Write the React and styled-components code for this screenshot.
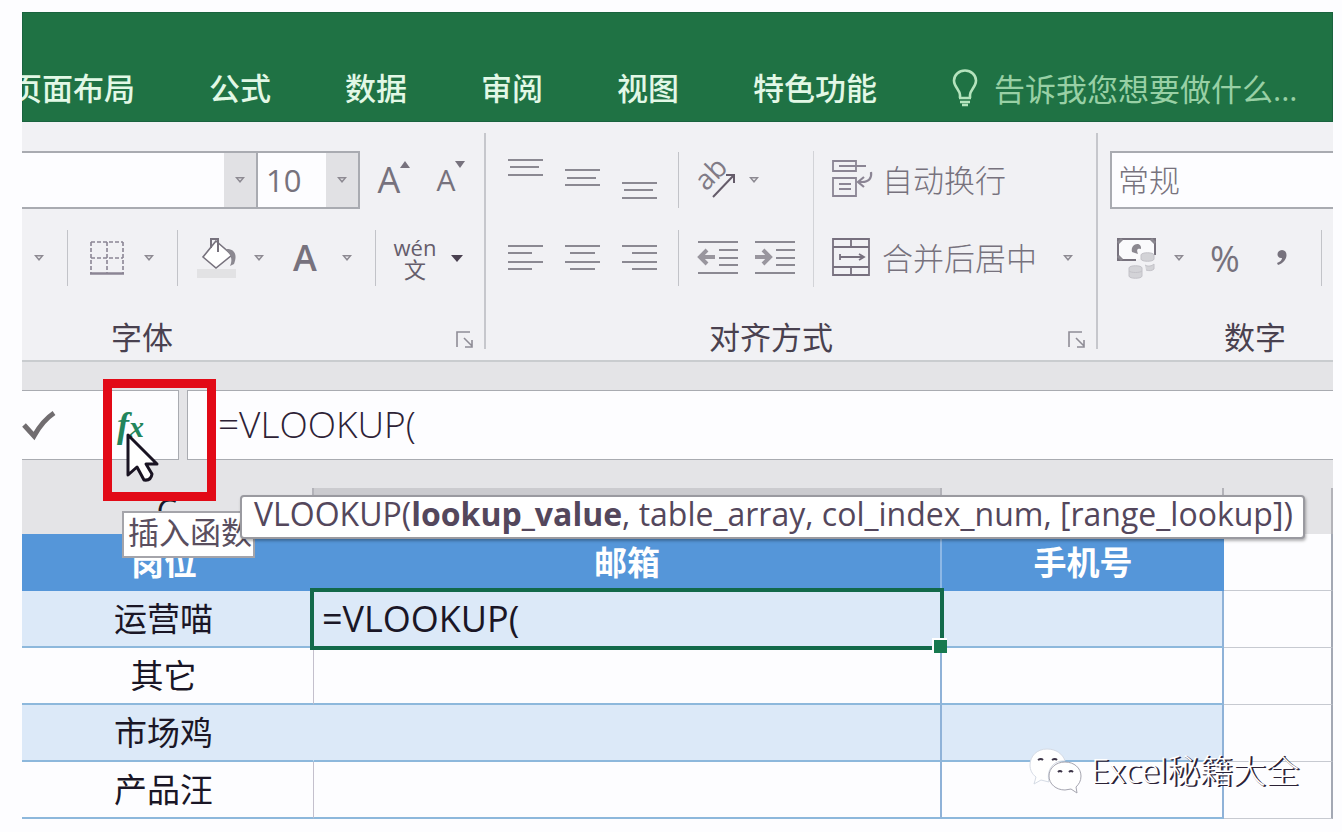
import React, { useState } from "react";
import styled, { createGlobalStyle } from "styled-components";

const people = ["运营喵", "其它", "市场鸡", "产品汪"];

const DropArrow = ({ dark }) => (
  <svg width="12" height="8" viewBox="0 0 12 8" aria-hidden="true">
    {dark ? (
      <path d="M0 1h12L6 8z" fill="#4a4150" />
    ) : (
      <path d="M1 1h10L6 7z M4 2.6h4L6 4.6z" fill="#8d8a92" fillRule="evenodd" />
    )}
  </svg>
);

const Lines = ({ rows, height = 36 }) => (
  <svg width="36" height={height} viewBox={`0 0 36 ${height}`} aria-hidden="true">
    {rows.map(([x, y, w]) => (
      <rect key={y} x={x} y={y} width={w} height="2" fill="#8b8992" />
    ))}
  </svg>
);

const Launcher = () => (
  <svg width="18" height="18" viewBox="0 0 18 18" fill="none" stroke="#8f8d96" strokeWidth="1.6" aria-hidden="true">
    <path d="M1 16V1h13" />
    <path d="M8 7l8 8M16 9v7H9" />
  </svg>
);

const IndentIcon = ({ right }) => (
  <svg width="40" height="34" viewBox="0 0 40 34" aria-hidden="true">
    <g fill="#8b8992">
      <rect x="0" y="0" width="40" height="2" />
      <rect x="21" y="8" width="19" height="2" />
      <rect x="21" y="16" width="19" height="2" />
      <rect x="21" y="23" width="19" height="2" />
      <rect x="0" y="31" width="40" height="2" />
    </g>
    <path
      d={right ? "M0 16h14M8 9l7 7-7 7" : "M17 16H3M9 9l-7 7 7 7"}
      fill="none"
      stroke="#99969e"
      strokeWidth="4"
    />
  </svg>
);

const App = () => {
  const [formula, setFormula] = useState("=VLOOKUP(");

  return (
    <Page>
      <GlobalStyle />
      <Workbook>
        <TabBar>
          <Tabs>
            {["页面布局", "公式", "数据", "审阅", "视图", "特色功能"].map((name) => (
              <Tab key={name} type="button">
                {name}
              </Tab>
            ))}
          </Tabs>
          <TellMe>
            <svg width="26" height="38" viewBox="0 0 26 38" fill="none" stroke="#b4e3bd" strokeWidth="2.6" aria-hidden="true">
              <path d="M8 29v-3C8 21 2 18 2 11.500A11 10 0 0 1 24 11.500C24 18 18 21 18 26v3" />
              <path d="M7 29h12M8 33h10M10 36h6" />
            </svg>
            <TellMeInput aria-label="告诉我" placeholder="告诉我您想要做什么..." />
          </TellMe>
        </TabBar>

        <Ribbon>
          <Group>
            <Tools>
              <ToolRow>
                <Combos>
                  <Combo $grow>
                    <ComboSelect aria-label="字体" defaultValue="">
                      <option value=""></option>
                    </ComboSelect>
                    <ComboArrow>
                      <DropArrow />
                    </ComboArrow>
                  </Combo>
                  <Combo>
                    <ComboSelect aria-label="字号" defaultValue="10">
                      <option>10</option>
                    </ComboSelect>
                    <ComboArrow>
                      <DropArrow />
                    </ComboArrow>
                  </Combo>
                </Combos>
                <ToolButton type="button" aria-label="增大字号">
                  <Letter>A</Letter>
                  <SizeMark>
                    <path d="M0 7L5 0l5 7z" />
                  </SizeMark>
                </ToolButton>
                <ToolButton type="button" aria-label="减小字号">
                  <Letter $small>A</Letter>
                  <SizeMark>
                    <path d="M0 0h10L5 7z" />
                  </SizeMark>
                </ToolButton>
              </ToolRow>
              <ToolRow $indent={5}>
                <DropButton type="button" aria-label="下划线">
                  <DropArrow />
                </DropButton>
                <Divider />
                <Split>
                  <ToolButton type="button" aria-label="边框">
                    <svg width="34" height="34" viewBox="0 0 34 34" fill="none" stroke="#8b8594" aria-hidden="true">
                      <path d="M1 1h32M1 17h32M1 1v31M17 1v31M33 1v31" strokeWidth="1.6" strokeDasharray="4 2" />
                      <path d="M0 32.500h34" strokeWidth="2.4" />
                    </svg>
                  </ToolButton>
                  <DropButton type="button" aria-label="边框选项">
                    <DropArrow />
                  </DropButton>
                </Split>
                <Divider />
                <Split>
                  <ToolButton type="button" aria-label="填充颜色">
                    <svg width="40" height="42" viewBox="0 0 40 42" aria-hidden="true">
                      <rect x="0" y="32" width="39" height="9" fill="#e2e2e4" />
                      <path d="M19 4L35 18 19 31 6 20z" fill="#fff" stroke="#77727d" strokeWidth="1.600" />
                      <path d="M14 11V2h7v13" fill="none" stroke="#77727d" strokeWidth="2" />
                      <path d="M28 12c9-1 13 5 9 15l-4 2c3-7 1-11-5-17z" fill="#8b8890" />
                    </svg>
                  </ToolButton>
                  <DropButton type="button" aria-label="填充颜色选项">
                    <DropArrow />
                  </DropButton>
                </Split>
                <Split>
                  <ToolButton type="button" aria-label="字体颜色">
                    <Letter $heavy>A</Letter>
                  </ToolButton>
                  <DropButton type="button" aria-label="字体颜色选项">
                    <DropArrow />
                  </DropButton>
                </Split>
                <Divider />
                <Split>
                  <PinyinButton type="button">
                    <span>wén</span>
                    <span>文</span>
                  </PinyinButton>
                  <DropButton type="button" aria-label="拼音选项">
                    <DropArrow dark />
                  </DropButton>
                </Split>
              </ToolRow>
            </Tools>
            <Caption $indent={89}>
              字体
              <LauncherButton type="button" aria-label="字体设置">
                <Launcher />
              </LauncherButton>
            </Caption>
          </Group>

          <Group>
            <AlignTools>
              <Tools>
                <ToolRow>
                  <ToolButton type="button" aria-label="顶端对齐">
                    <Lines height={42} rows={[[1, 0, 35], [3, 7, 29], [1, 15, 35]]} />
                  </ToolButton>
                  <ToolButton type="button" aria-label="垂直居中">
                    <Lines height={42} rows={[[1, 10, 35], [3, 18, 29], [1, 25, 35]]} />
                  </ToolButton>
                  <ToolButton type="button" aria-label="底端对齐">
                    <Lines height={42} rows={[[1, 23, 35], [3, 30, 29], [1, 38, 35]]} />
                  </ToolButton>
                  <Divider />
                  <Split>
                    <ToolButton type="button" aria-label="方向" $narrow>
                      <svg width="40" height="40" viewBox="0 0 40 40" aria-hidden="true">
                        <text x="11" y="32" transform="rotate(-45 11 32)" fontSize="28" fill="#807b86">
                          ab
                        </text>
                        <path d="M18 37L39 15M31 15h8v8" fill="none" stroke="#655c6a" strokeWidth="2" />
                      </svg>
                    </ToolButton>
                    <DropButton type="button" aria-label="方向选项">
                      <DropArrow />
                    </DropButton>
                  </Split>
                </ToolRow>
                <ToolRow>
                  <ToolButton type="button" aria-label="左对齐">
                    <Lines height={28} rows={[[1, 1, 35], [1, 8, 24], [1, 17, 35], [1, 24, 24]]} />
                  </ToolButton>
                  <ToolButton type="button" aria-label="居中">
                    <Lines height={28} rows={[[1, 1, 35], [6, 8, 25], [1, 17, 35], [6, 24, 25]]} />
                  </ToolButton>
                  <ToolButton type="button" aria-label="右对齐">
                    <Lines height={28} rows={[[1, 1, 35], [11, 8, 25], [1, 17, 35], [11, 24, 25]]} />
                  </ToolButton>
                  <Divider />
                  <ToolButton type="button" aria-label="减少缩进量">
                    <IndentIcon />
                  </ToolButton>
                  <ToolButton type="button" aria-label="增加缩进量">
                    <IndentIcon right />
                  </ToolButton>
                </ToolRow>
              </Tools>
              <TallDivider />
              <Tools>
                <ToolRow>
                  <TextButton type="button">
                    <svg width="40" height="40" viewBox="0 0 40 40" fill="none" stroke="#8b8594" strokeWidth="1.800" aria-hidden="true">
                      <path d="M1 1h23v10H1zM7 6h27M1 18h23v18H1zM7 24h12M7 29h12" />
                      <path d="M39 12c1 6-2 10-9 10h-3M32 17l-6 5 6 5" strokeWidth="2.200" />
                    </svg>
                    自动换行
                  </TextButton>
                </ToolRow>
                <ToolRow>
                  <TextButton type="button">
                    <svg width="40" height="40" viewBox="0 0 40 40" fill="none" stroke="#77707e" strokeWidth="1.800" aria-hidden="true">
                      <path d="M1 1h36v36H1zM1 9h36M1 29h36M19 1v8M19 29v8" />
                      <path d="M8 19h23M8 16v6M27 16l5 3-5 3" />
                    </svg>
                    合并后居中
                  </TextButton>
                  <DropButton type="button" aria-label="合并选项">
                    <DropArrow />
                  </DropButton>
                </ToolRow>
              </Tools>
            </AlignTools>
            <Caption>
              <span>对齐方式</span>
              <LauncherButton type="button" aria-label="对齐设置">
                <Launcher />
              </LauncherButton>
            </Caption>
          </Group>

          <Group>
            <NumberTools>
              <NumberCombo>
                <ComboSelect aria-label="数字格式" defaultValue="常规">
                  <option>常规</option>
                </ComboSelect>
              </NumberCombo>
              <ToolRow $indent={4}>
                <Split>
                  <ToolButton type="button" aria-label="会计数字格式">
                    <svg width="40" height="42" viewBox="0 0 40 42" fill="none" aria-hidden="true">
                      <path d="M19 23H1V2h37v16" stroke="#77727d" strokeWidth="2" fill="#fafafc" />
                      <path d="M1 6l4-4M34 2l4 4M1 19l4 4" stroke="#8b8890" strokeWidth="3" />
                      <path d="M15 15c-2-9 10-11 9-3-5-1-4 2-3 5z" fill="#8b8890" />
                      <g fill="#d3d3d7" stroke="#c3c2c8">
                        <path d="M24 18c0-3 13-3 13 0v4c0 3-13 3-13 0zM12 31c0-3 13-3 13 0v8c0 3-13 3-13 0z" />
                        <path d="M12 34c2 2 11 2 13 0M28 28c3 2 7 1 9-1v5c-2 2-5 2-8 1" />
                      </g>
                    </svg>
                  </ToolButton>
                  <DropButton type="button" aria-label="会计格式选项">
                    <DropArrow />
                  </DropButton>
                </Split>
                <SymbolButton type="button">%</SymbolButton>
                <ToolButton type="button" aria-label="千位分隔样式">
                  <svg width="10" height="18" viewBox="0 0 10 18" aria-hidden="true">
                    <path d="M5 1c7 0 6 12-4 15l-1-2c3-1 5-3 5-5C-1 10-1 1 5 1z" fill="#77727d" />
                  </svg>
                </ToolButton>
                <Divider />
              </ToolRow>
            </NumberTools>
            <Caption $indent={126}>数字</Caption>
          </Group>
        </Ribbon>

        <FormulaBar>
          <FormulaButtons>
            <EnterButton type="button" aria-label="输入">
              <svg width="34" height="30" viewBox="0 0 34 30" aria-hidden="true">
                <path d="M2 15l10 11C17 17 23 9 32 3" fill="none" stroke="#716d70" strokeWidth="5" />
              </svg>
            </EnterButton>
            <FxButton type="button">
              f<small>x</small>
            </FxButton>
            <Highlight />
            <Cursor width="34" height="50" viewBox="0 0 34 50">
              <path
                d="M2 2v40l9-8 7 13q7 1 8-6l-6-10h11z"
                fill="#fff"
                stroke="#191322"
                strokeWidth="3"
                strokeLinejoin="round"
              />
            </Cursor>
            <ButtonTip role="tooltip">插入函数</ButtonTip>
          </FormulaButtons>
          <FormulaInput aria-label="编辑栏" value={formula} onChange={(e) => setFormula(e.target.value)} />
          <FormulaTip role="tooltip">
            VLOOKUP(<b>lookup_value</b>, table_array, col_index_num, [range_lookup])
          </FormulaTip>
        </FormulaBar>

        <Sheet>
          <colgroup>
            <Col $width="22.27%" />
            <Col $width="47.9%" />
            <Col $width="21.51%" />
            <Col />
          </colgroup>
          <thead>
            <tr>
              <ColumnHead scope="col">C</ColumnHead>
              <ColumnHead $active />
              <ColumnHead />
              <ColumnHead />
            </tr>
          </thead>
          <tbody>
            <HeadRow>
              <th scope="col">岗位</th>
              <th scope="col">邮箱</th>
              <th scope="col">手机号</th>
              <td />
            </HeadRow>
            {people.map((name, i) => (
              <Row key={name} $shaded={i % 2 === 0}>
                <td>{name}</td>
                {i === 0 ? (
                  <ActiveCell>
                    {formula}
                    <Selection />
                  </ActiveCell>
                ) : (
                  <td />
                )}
                <td />
                <td />
              </Row>
            ))}
          </tbody>
        </Sheet>

        <Watermark>
          <svg width="52" height="46" viewBox="0 0 52 46" aria-hidden="true">
            <path
              d="M18 1C8 1 1 8 1 17c0 5 2 9 6 12l-2 7 7-4 8 2C17 21 25 12 36 13 34 6 27 1 18 1z"
              fill="#fff"
              stroke="#d5dbe5"
            />
            <path
              d="M36 14c-9 0-16 6-16 14s7 14 16 14l6-1 6 4-1-6c3-3 5-6 5-11 0-8-7-14-16-14z"
              fill="#fff"
              stroke="#a5a5b0"
            />
            <path d="M9 12q3-2 5 0M23 12q3-2 5 0M29 24q2-2 4 0M40 24q2-2 4 0" stroke="#3d3548" strokeWidth="2" fill="none" />
          </svg>
          <span>Excel秘籍大全</span>
        </Watermark>
      </Workbook>
    </Page>
  );
};

export default App;

const GlobalStyle = createGlobalStyle`
  * {
    box-sizing: border-box;
  }

  body {
    margin: 0;
    background: #fdfdff;
    font-family: "Open Sans", "Noto Sans CJK SC", sans-serif;
  }

  button, input, select {
    margin: 0;
    padding: 0;
    border: none;
    border-radius: 0;
    background: none;
    font: inherit;
    color: inherit;
  }

  svg {
    display: block;
    flex: none;
    overflow: visible;
  }
`;

const Page = styled.div`
  padding: 12px 9px 12px 22px;
`;

const Workbook = styled.main`
  position: relative;
  overflow: hidden;
  font-size: 31px;
`;

const TabBar = styled.nav`
  display: flex;
  align-items: center;
  height: 110px;
  padding-top: 42px;
  background: #1f7244;
  border: 1px solid #19633f;
`;

const Tabs = styled.div`
  display: flex;
  gap: 74px;
  margin-left: -12px;
`;

const Tab = styled.button`
  flex: none;
  line-height: 40px;
  font-weight: 500;
  color: #e2f8e6;
`;

const TellMe = styled.label`
  display: flex;
  flex: 1;
  align-items: center;
  gap: 16px;
  min-width: 0;
  margin-left: 75px;
`;

const TellMeInput = styled.input`
  flex: 1;
  min-width: 0;
  height: 44px;
  padding-top: 2px;
  color: #b4e3bd;

  &::placeholder {
    color: #98d0a5;
    opacity: 1;
  }
`;

const Ribbon = styled.section`
  display: grid;
  grid-template-columns: 464fr 612fr 235fr;
  height: 240px;
  padding: 11px 0;
  background: #f1f1f4;
  border-bottom: 2px solid #c9cccf;
  color: #77727d;
`;

const Group = styled.div`
  display: flex;
  flex-direction: column;
  justify-content: space-between;
  min-width: 0;
  padding-top: 18px;

  &:not(:last-child) {
    border-right: 2px solid #c6c7cc;
  }
`;

const Tools = styled.div`
  display: flex;
  flex-direction: column;
  gap: 20px;
`;

const AlignTools = styled.div`
  display: flex;
  padding-left: 16px;
`;

const NumberTools = styled(Tools)`
  padding-left: 12px;
`;

const ToolRow = styled.div`
  display: flex;
  align-items: center;
  gap: 11px;
  height: 58px;
  padding-right: 10px;
  padding-left: ${(props) => props.$indent || 0}px;
`;

const Divider = styled.i`
  flex: none;
  width: 1px;
  height: 56px;
  margin: 0 5px;
  background: #c2c3c8;
`;

const TallDivider = styled.i`
  width: 1px;
  margin: 0 18px 0 5px;
  background: #d2d3d7;
`;

const Split = styled.div`
  display: flex;
  align-items: center;
  gap: 7px;
`;

const ToolButton = styled.button`
  display: flex;
  flex: none;
  align-items: center;
  justify-content: center;
  width: ${(props) => (props.$narrow ? 40 : 46)}px;
  height: 56px;
`;

const SymbolButton = styled(ToolButton)`
  font-size: 36px;
`;

const DropButton = styled(ToolButton)`
  width: 24px;
`;

const PinyinButton = styled(ToolButton)`
  flex-direction: column;
  font-size: 22px;
  line-height: 22px;
  color: #655d6b;
`;

const TextButton = styled.button`
  display: flex;
  align-items: center;
  gap: 10px;
  height: 56px;
  padding-right: 8px;
  white-space: nowrap;
  font-weight: 300;
  line-height: 40px;
`;

const Letter = styled.span`
  font-size: ${(props) => (props.$small ? 30 : 36)}px;
  font-weight: ${(props) => (props.$heavy ? 600 : 400)};
  line-height: 56px;
`;

const SizeMark = styled.svg.attrs({ width: 10, height: 7, viewBox: "0 0 10 7", "aria-hidden": true })`
  align-self: flex-start;
  margin-top: 9px;
  fill: #77727d;
`;

const Combos = styled.div`
  display: flex;
  flex: 1;
  min-width: 0;
`;

const Combo = styled.div`
  display: flex;
  flex: ${(props) => (props.$grow ? "1" : "none")};
  width: 102px;
  height: 58px;
  background: #fdfdff;
  border: 2px solid #a9abb1;
  border-left-width: 0;
`;

const ComboSelect = styled.select`
  flex: 1;
  min-width: 0;
  padding-left: 8px;
  appearance: none;
`;

const ComboArrow = styled.span`
  display: flex;
  align-items: center;
  justify-content: center;
  width: 32px;
  background: #e1e1e4;
`;

const NumberCombo = styled(Combo)`
  width: auto;
  border-left-width: 2px;
  border-right-width: 0;

  ${ComboSelect} {
    padding-left: 6px;
    font-weight: 300;
  }
`;

const Caption = styled.div`
  display: flex;
  align-items: center;
  height: 24px;
  padding-left: ${(props) => props.$indent || 0}px;
  line-height: 24px;
  color: #49414f;

  & > span {
    flex: 1;
    padding-right: 12px;
    text-align: center;
  }
`;

const LauncherButton = styled.button`
  align-self: flex-end;
  margin-left: auto;
  padding-right: 10px;
`;

const FormulaBar = styled.section`
  position: relative;
  z-index: 1;
  display: flex;
  gap: 8px;
  height: 126px;
  padding: 28px 0;
  background: #e4e4e7;
`;

const FormulaButtons = styled.div`
  position: relative;
  display: flex;
  width: 157px;
  background: #fdfdff;
  border: 1px solid #a9abb1;
  border-left: none;
`;

const EnterButton = styled.button`
  width: 81px;
`;

const FxButton = styled.button`
  flex: 1;
  padding-left: 14px;
  text-align: left;
  font-family: "Liberation Serif", serif;
  font-size: 36px;
  font-style: italic;
  font-weight: bold;
  color: #22855c;

  small {
    font-size: 30px;
  }
`;

const Highlight = styled.div`
  position: absolute;
  top: -12px;
  left: 81px;
  width: 113px;
  height: 122px;
  border: 9px solid #e20a17;
  pointer-events: none;
`;

const Cursor = styled.svg`
  position: absolute;
  top: 42px;
  left: 104px;
`;

const ButtonTip = styled.div`
  position: absolute;
  top: 120px;
  left: 100px;
  width: 133px;
  height: 47px;
  padding-left: 4px;
  background: #fff;
  border: 2px solid #a4a4aa;
  line-height: 38px;
  white-space: nowrap;
  color: #5a4f5f;
`;

const FormulaInput = styled.input`
  flex: 1;
  min-width: 0;
  padding: 0 0 4px 30px;
  background: #fdfdff;
  border: 1px solid #a9abb1;
  border-right: none;
  font-size: 37px;
  font-weight: 300;
  color: #2d2236;
`;

const FormulaTip = styled.div`
  position: absolute;
  top: 133px;
  left: 218px;
  height: 44px;
  padding: 0 10px 0 12px;
  background: #fff;
  border: 2px solid #9a9aa0;
  border-radius: 4px;
  box-shadow: 1px 2px 3px rgba(0, 0, 0, 0.3);
  font-size: 32px;
  line-height: 34px;
  white-space: nowrap;
  color: #54475c;

  b {
    font-weight: 700;
  }
`;

const Sheet = styled.table`
  width: 100%;
  table-layout: fixed;
  border-collapse: separate;
  border-spacing: 0;
  font-size: 33px;
  line-height: 40px;
  color: #1a1626;

  th, td {
    padding: 0;
  }

  tbody th:first-child, tbody td:first-child {
    padding-right: 8px;
  }

  tbody td:last-child {
    background: #fdfdff;
    border-right: 2px solid #a3a8b4;
    border-bottom: 1px solid #c7cad1;
  }
`;

const Col = styled.col`
  width: ${(props) => props.$width || "auto"};
`;

const ColumnHead = styled.th`
  height: 46px;
  background: ${(props) => (props.$active ? "#cbcbcf" : "#e4e4e7")};
  border-right: 2px solid #b3b3b9;
  font-weight: 400;
`;

const HeadRow = styled.tr`
  height: 57px;

  th {
    background: #5596d9;
    color: #fff;
    font-weight: 700;
  }

  th:nth-child(2) {
    border-right: 2px solid #8db8e6;
  }
`;

const Row = styled.tr`
  height: 57px;

  td {
    text-align: center;
    background: ${(props) => (props.$shaded ? "#dce9f8" : "#fdfdff")};
    border-bottom: 2px solid #8db8dc;
  }

  td:first-child {
    border-right: 1px solid ${(props) => (props.$shaded ? "#dce9f8" : "#c4c0cd")};
  }

  td:nth-child(2), td:nth-child(3) {
    border-right: 2px solid #8fb2d8;
  }
`;

const ActiveCell = styled.td`
  position: relative;

  && {
    padding-left: 8px;
    text-align: left;
    font-size: 36px;
  }
`;

const Selection = styled.div`
  position: absolute;
  top: -3px;
  right: -4px;
  bottom: -4px;
  left: -4px;
  border: 4px solid #12694a;

  &::after {
    content: "";
    position: absolute;
    right: -7px;
    bottom: -7px;
    width: 13px;
    height: 13px;
    background: #17794f;
    border: 2px solid #fff;
    border-width: 2px 0 0 2px;
  }
`;

const Watermark = styled.div`
  position: absolute;
  right: 34px;
  bottom: 25px;
  display: flex;
  align-items: center;
  gap: 10px;
  font-size: 33px;
  font-weight: 300;
  line-height: 46px;
  color: #fff;
  text-shadow: 1px 1px 0 #2b2236, 2px 1px 0 #2b2236;
`;
